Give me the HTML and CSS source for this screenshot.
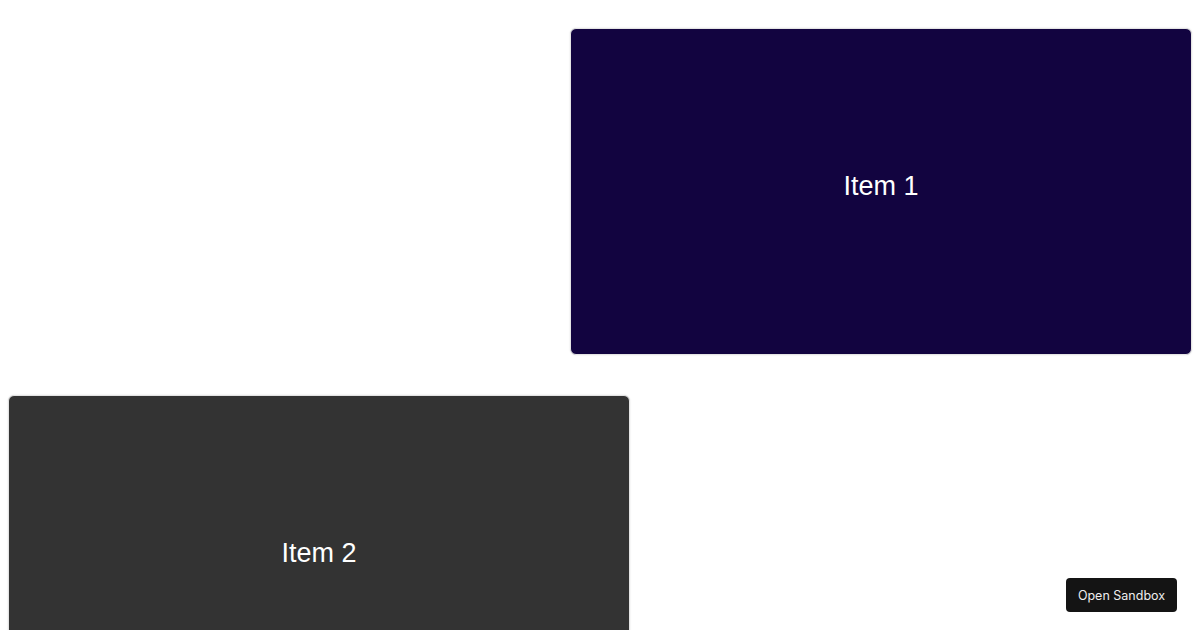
FILE: index.html
```html
<!DOCTYPE html>
<html>
<head>
<meta charset="utf-8">
<link rel="stylesheet" href="styles.css">
</head>
<body>
<main class="list">
  <div class="item item-one"><span class="label">Item 1</span></div>
  <div class="item item-two"><span class="label">Item 2</span></div>
</main>
<button class="sandbox">Open Sandbox</button>
</body>
</html>
```
FILE: styles.css
```css
html, body {
  margin: 0;
  padding: 0;
  background: #ffffff;
}
body {
  font-family: "Liberation Sans", Arial, sans-serif;
}
.list {
  display: flex;
  flex-direction: column;
  gap: 40px;
  padding: 28px 8px 20px 8px;
}
.item {
  box-sizing: border-box;
  width: 622px;
  height: 327px;
  border: 1px solid #e4e4e4;
  border-radius: 6px;
  box-shadow: 0 0 2px rgba(0, 0, 0, 0.12);
  display: flex;
  align-items: center;
  justify-content: center;
  padding-bottom: 10px;
}
.item-one {
  align-self: flex-end;
  background: #120440;
}
.item-two {
  align-self: flex-start;
  background: #333333;
}
.label {
  color: #ffffff;
  font-size: 27px;
}
.sandbox {
  position: fixed;
  right: 23px;
  bottom: 18px;
  width: 111px;
  height: 34px;
  border: none;
  border-radius: 4px;
  background: #141414;
  color: #eeeeee;
  font-family: Inter, "Liberation Sans", sans-serif;
  font-size: 12.5px;
  padding: 0;
}
```
